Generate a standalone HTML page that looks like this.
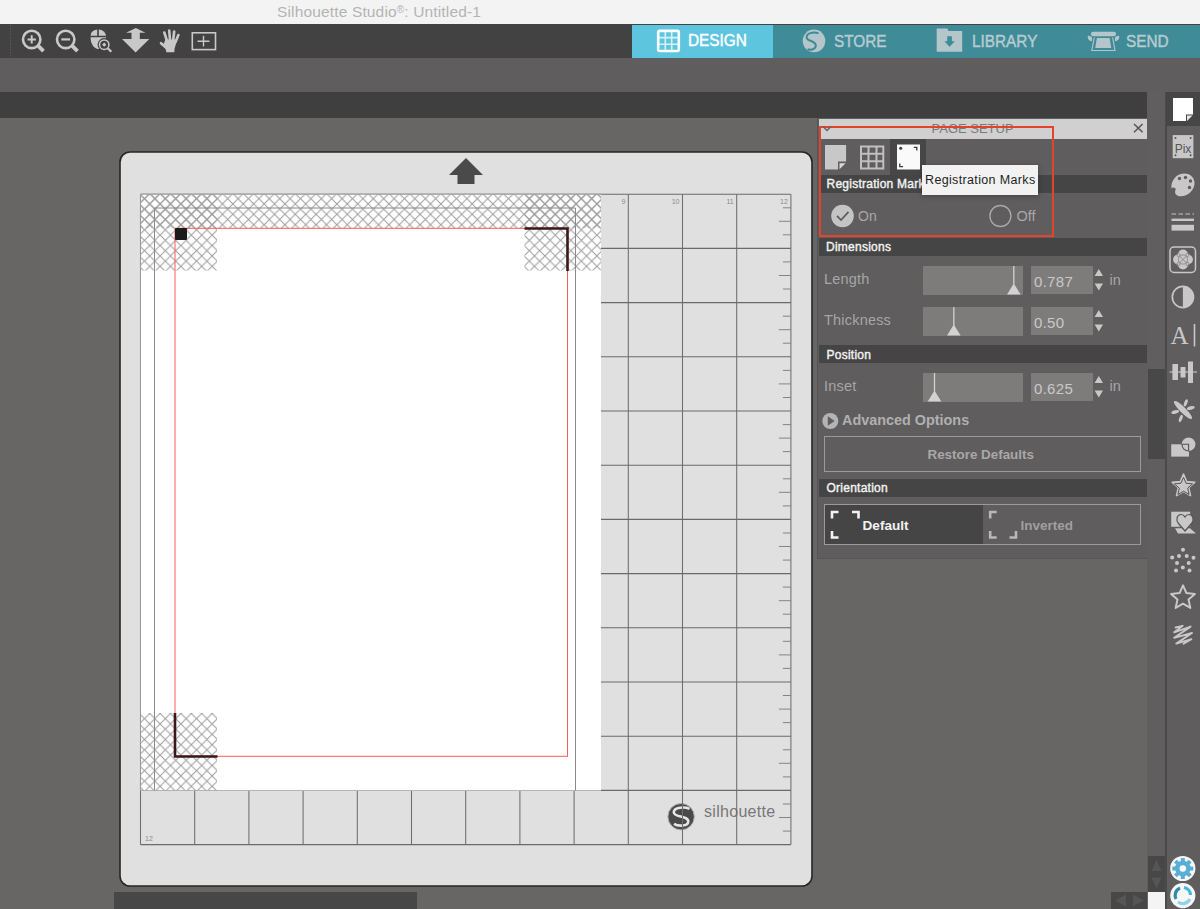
<!DOCTYPE html>
<html><head><meta charset="utf-8">
<style>
*{margin:0;padding:0;box-sizing:border-box}
html,body{width:1200px;height:909px;overflow:hidden;background:#686665;font-family:"Liberation Sans",sans-serif}
.a{position:absolute}
.t{position:absolute;white-space:nowrap;line-height:1}
#title{left:0;top:0;width:1200px;height:24px;background:#f3f3f3}
#tb{left:0;top:24px;width:1200px;height:34px;background:#424242}
#band1{left:0;top:58px;width:1200px;height:34px;background:#5f5d5e}
#band2{left:0;top:92px;width:1147px;height:26px;background:#3f3f3f}
#main{left:0;top:118px;width:1147px;height:791px;background:#686665}
.hdr{position:absolute;left:819px;width:328px;background:#454545}
.hdr span{position:absolute;left:8px;font-size:12px;font-weight:bold;color:#f0f0f0;line-height:1}
.lbl{font-size:14px;color:#a6a6a6}
.sl{position:absolute;left:923px;width:100px;background:#7d7c7b}
.inp{position:absolute;left:1031px;width:62px;background:#7d7c7b}
.inp span{position:absolute;left:4px;font-size:14px;color:#c9c9c9;line-height:1}
</style></head><body>
<div id="title" class="a"></div>
<div id="tb" class="a"></div>
<div id="band1" class="a"></div>
<div id="band2" class="a"></div>
<div id="main" class="a"></div>

<svg class="a" style="left:0;top:0" width="1200" height="909" viewBox="0 0 1200 909">
<defs><pattern id="hx" patternUnits="userSpaceOnUse" x="139.3" y="193.5" width="10.4" height="10.4"><path d="M0 0L10.4 10.4M10.4 0L0 10.4" stroke="#9c9c9c" stroke-width="1" fill="none"/></pattern></defs>
<rect x="120" y="152" width="692" height="734" rx="10" ry="10" fill="#e0e0e0" stroke="#262626" stroke-width="1.6"/>
<circle cx="681.1" cy="816.7" r="13.2" fill="#4a4a4a" stroke="#b0b0b0" stroke-width="1"/>
<path d="M689.5 808.8C685 806.5 673.5 807 673.8 812.5C674.2 817.5 688.5 815.5 688.3 821.5C688.1 826.5 678 826.5 674 823.8" stroke="#e6e6e6" stroke-width="2.6" fill="none"/>
<text x="704" y="817.2" font-size="16" fill="#777" font-family="Liberation Sans" letter-spacing="0.3">silhouette</text>
<path d="M140.5 194.2V844.6M194.7 194.2V844.6M248.9 194.2V844.6M303.1 194.2V844.6M357.3 194.2V844.6M411.5 194.2V844.6M465.7 194.2V844.6M519.9 194.2V844.6M574.1 194.2V844.6M628.3 194.2V844.6M682.5 194.2V844.6M736.7 194.2V844.6M790.9 194.2V844.6" stroke="#6e6e6e" stroke-width="1.05" fill="none"/>
<path d="M140.5 194.2H790.9M140.5 248.4H790.9M140.5 302.6H790.9M140.5 356.8H790.9M140.5 411.0H790.9M140.5 465.2H790.9M140.5 519.4H790.9M140.5 573.6H790.9M140.5 627.8H790.9M140.5 682.0H790.9M140.5 736.2H790.9M140.5 790.4H790.9M140.5 844.6H790.9" stroke="#6a6a6a" stroke-width="1.1" fill="none"/>
<path d="M782.9 207.8H790.9M778.9 221.3H790.9M782.9 234.8H790.9M782.9 261.9H790.9M778.9 275.5H790.9M782.9 289.0H790.9M782.9 316.2H790.9M778.9 329.7H790.9M782.9 343.2H790.9M782.9 370.4H790.9M778.9 383.9H790.9M782.9 397.5H790.9M782.9 424.6H790.9M778.9 438.1H790.9M782.9 451.6H790.9M782.9 478.8H790.9M778.9 492.3H790.9M782.9 505.9H790.9M782.9 533.0H790.9M778.9 546.5H790.9M782.9 560.1H790.9M782.9 587.1H790.9M778.9 600.7H790.9M782.9 614.2H790.9M782.9 641.3H790.9M778.9 654.9H790.9M782.9 668.4H790.9M782.9 695.5H790.9M778.9 709.1H790.9M782.9 722.6H790.9M782.9 749.8H790.9M778.9 763.3H790.9M782.9 776.9H790.9M782.9 804.0H790.9M778.9 817.5H790.9M782.9 831.1H790.9" stroke="#7a7a7a" stroke-width="0.9" fill="none"/>
<text x="625.3" y="203.5" text-anchor="end" font-size="7" fill="#8a8a8a" font-family="Liberation Sans">9</text>
<text x="679.5" y="203.5" text-anchor="end" font-size="7" fill="#8a8a8a" font-family="Liberation Sans">10</text>
<text x="733.7" y="203.5" text-anchor="end" font-size="7" fill="#8a8a8a" font-family="Liberation Sans">11</text>
<text x="787.9" y="203.5" text-anchor="end" font-size="7" fill="#8a8a8a" font-family="Liberation Sans">12</text>
<text x="145" y="841" font-size="7" fill="#8a8a8a" font-family="Liberation Sans">12</text>
<rect x="140.5" y="194.2" width="460.5" height="596.3" fill="#fff"/>
<rect x="140.5" y="194.2" width="460.5" height="33.8" fill="url(#hx)"/>
<rect x="140.5" y="194.2" width="76.5" height="76.3" fill="url(#hx)"/>
<rect x="524.5" y="194.2" width="76.5" height="76.3" fill="url(#hx)"/>
<rect x="140.5" y="713.0" width="76.5" height="77.5" fill="url(#hx)"/>
<path d="M140.5 790.5V194.2H601.0" stroke="#9a9a9a" stroke-width="1" fill="none"/>
<path d="M154.5 790.5V208H575.5V790.5" stroke="#8a8a8a" stroke-width="1" fill="none"/>
<rect x="175" y="228.3" width="392.5" height="528" fill="none" stroke="#ff5a5a" stroke-width="1"/>
<rect x="175" y="228" width="12" height="12" rx="1" fill="#1c1a1a"/>
<path d="M524.5 228.5H567.5V271M175 713V756.5H217.5" stroke="#3a1818" stroke-width="2.6" fill="none"/>
<path d="M466 158L483 175H474.5V184H457.5V175H449Z" fill="#4a4a4a"/>
</svg>
<div class="a" style="left:632px;top:25px;width:141px;height:33px;background:#5ec5df"></div>
<div class="a" style="left:773px;top:25px;width:427px;height:33px;background:#3f8b98"></div>

<!-- panel -->
<div class="a" style="left:817px;top:118px;width:330px;height:441px;background:#5f5d5e;border-left:1px solid #555;border-bottom:1px solid #575757"></div>
<div class="a" style="left:819px;top:119px;width:328px;height:20px;background:#d0d0d0"></div>
<div class="a" style="left:890px;top:139px;width:36px;height:36px;background:#474747"></div>
<div class="hdr" style="top:175px;height:18px"></div>
<div class="hdr" style="top:238px;height:18px"></div>
<div class="sl" style="top:266px;height:29px"></div>
<div class="inp" style="top:266px;height:28px"></div>
<div class="sl" style="top:307px;height:29px"></div>
<div class="inp" style="top:307px;height:28px"></div>
<div class="hdr" style="top:345px;height:18px"></div>
<div class="sl" style="top:373px;height:29px"></div>
<div class="inp" style="top:373px;height:28px"></div>
<div class="a" style="left:824px;top:436px;width:317px;height:36px;border:1px solid #9a9a9a"></div>
<div class="hdr" style="top:479px;height:18px"></div>
<div class="a" style="left:824px;top:504px;width:317px;height:41px;border:1px solid #9a9a9a"></div>
<div class="a" style="left:825px;top:505px;width:158px;height:39px;background:#454545"></div>
<!-- scrollbars -->
<div class="a" style="left:1147px;top:92px;width:18px;height:800px;background:#605e5f"></div>
<div class="a" style="left:1148px;top:369px;width:17px;height:90px;background:#484848"></div>
<div class="a" style="left:1165px;top:92px;width:35px;height:817px;background:#5f5d5e;border-left:2px solid #4a4a4a"></div>
<div class="a" style="left:1166px;top:92px;width:34px;height:34px;background:#464646"></div>
<div class="a" style="left:114px;top:892px;width:303px;height:17px;background:#474747"></div>
<div class="a" style="left:1111px;top:892px;width:36px;height:17px;background:#474747"></div>
<div class="a" style="left:1148px;top:856px;width:17px;height:36px;background:#474747"></div>
<div class="a" style="left:1148px;top:892px;width:17px;height:17px;background:#f4f4f4"></div>

<span class="t" style="left:277px;top:3.9px;font-size:15.5px;color:#b3b3b3;font-weight:normal;letter-spacing:0.15px">Silhouette Studio<span style="font-size:10px;vertical-align:4px">®</span>: Untitled-1</span>
<span class="t" style="left:931.5px;top:122.3px;font-size:13px;color:#7a7a7a;font-weight:normal;">PAGE SETUP</span>
<span class="t" style="left:826.5px;top:178.2px;font-size:12px;color:#f2f2f2;font-weight:normal;-webkit-text-stroke:0.4px #f2f2f2;letter-spacing:0.25px">Registration Marks</span>
<span class="t" style="left:826px;top:241.1px;font-size:12px;color:#f2f2f2;font-weight:normal;-webkit-text-stroke:0.4px #f2f2f2;letter-spacing:0.25px">Dimensions</span>
<span class="t" style="left:826.5px;top:348.6px;font-size:12px;color:#f2f2f2;font-weight:normal;-webkit-text-stroke:0.4px #f2f2f2;letter-spacing:0.25px">Position</span>
<span class="t" style="left:826.5px;top:482.4px;font-size:12px;color:#f2f2f2;font-weight:normal;-webkit-text-stroke:0.4px #f2f2f2;letter-spacing:0.25px">Orientation</span>
<span class="t" style="left:824px;top:272.3px;font-size:14.5px;color:#a6a6a6;font-weight:normal;letter-spacing:0.2px">Length</span>
<span class="t" style="left:824px;top:312.9px;font-size:14.5px;color:#a6a6a6;font-weight:normal;letter-spacing:0.2px">Thickness</span>
<span class="t" style="left:824px;top:379.3px;font-size:14.5px;color:#a6a6a6;font-weight:normal;letter-spacing:0.2px">Inset</span>
<span class="t" style="left:1034px;top:274.0px;font-size:15px;color:#c9c9c9;font-weight:normal;letter-spacing:0.3px">0.787</span>
<span class="t" style="left:1034px;top:314.9px;font-size:15px;color:#c9c9c9;font-weight:normal;letter-spacing:0.3px">0.50</span>
<span class="t" style="left:1034px;top:381.4px;font-size:15px;color:#c9c9c9;font-weight:normal;letter-spacing:0.3px">0.625</span>
<span class="t" style="left:1109.5px;top:272.5px;font-size:14.5px;color:#a6a6a6;font-weight:normal;">in</span>
<span class="t" style="left:1109.5px;top:379.2px;font-size:14.5px;color:#a6a6a6;font-weight:normal;">in</span>
<span class="t" style="left:842px;top:413.3px;font-size:14.4px;color:#b0b0b0;font-weight:bold;">Advanced Options</span>
<span class="t" style="left:927.5px;top:448.4px;font-size:13.4px;color:#a8a8a8;font-weight:bold;">Restore Defaults</span>
<span class="t" style="left:862.5px;top:519.0px;font-size:13.6px;color:#f2f2f2;font-weight:bold;">Default</span>
<span class="t" style="left:1020.5px;top:519.1px;font-size:13.5px;color:#a0a0a0;font-weight:bold;">Inverted</span>
<span class="t" style="left:858px;top:209.0px;font-size:14px;color:#a8a8a8;font-weight:normal;">On</span>
<span class="t" style="left:1016.5px;top:208.6px;font-size:14.5px;color:#a8a8a8;font-weight:normal;">Off</span>
<span class="t" style="left:688px;top:32.3px;font-size:16.5px;color:#ffffff;transform:scaleX(0.93);transform-origin:0 0;-webkit-text-stroke:0.45px #ffffff">DESIGN</span>
<span class="t" style="left:834px;top:32.8px;font-size:16.5px;color:#b8cbd0;transform:scaleX(0.93);transform-origin:0 0;-webkit-text-stroke:0.45px #b8cbd0">STORE</span>
<span class="t" style="left:972px;top:32.8px;font-size:16.5px;color:#b8cbd0;transform:scaleX(0.93);transform-origin:0 0;-webkit-text-stroke:0.45px #b8cbd0">LIBRARY</span>
<span class="t" style="left:1125.5px;top:32.8px;font-size:16.5px;color:#b8cbd0;transform:scaleX(0.93);transform-origin:0 0;-webkit-text-stroke:0.45px #b8cbd0">SEND</span>
<div class="a" style="left:819px;top:126px;width:235px;height:111px;border:2px solid #e4432b"></div>
<div class="a" style="left:922px;top:165px;width:116px;height:30px;background:#f2f2f2;box-shadow:0 1px 5px rgba(0,0,0,.3)"></div>
<span class="t" style="left:925px;top:173.8px;font-size:12.5px;color:#1e1e1e;font-weight:normal;letter-spacing:0.35px">Registration Marks</span>
<svg class="a" style="left:0;top:0" width="1200" height="909" viewBox="0 0 1200 909">
<path d="M10.5 25V58" stroke="#5a5a5a" stroke-width="1" stroke-dasharray="1.5 1.5"/>
<g fill="none" stroke="#c8c8c8"><circle cx="31.7" cy="39.4" r="8.7" stroke-width="2.6"/><path d="M38 45.7L43.5 51.2" stroke-width="3.8"/><path d="M27.5 39.4H35.9M31.7 35.3V43.5" stroke-width="2"/></g>
<g fill="none" stroke="#c8c8c8"><circle cx="65.7" cy="39.4" r="8.7" stroke-width="2.6"/><path d="M72 45.7L77.5 51.2" stroke-width="3.8"/><path d="M61.3 39.4H70.1" stroke-width="2.2"/></g>
<g fill="#c8c8c8"><path d="M90.6 35.7A7.8 6.5 0 0 1 97.2 29.5V35.7Z"/><path d="M98.8 29.5A7.8 6.5 0 0 1 106 35.7H98.8Z"/><path d="M90.5 37.2H106.1A7.8 11.8 0 0 1 90.5 37.2Z"/></g><circle cx="104.2" cy="44.7" r="6.6" fill="#424242"/>
<g fill="none" stroke="#c8c8c8"><circle cx="104.2" cy="44.7" r="4.7" stroke-width="1.5"/><path d="M107.8 48.3L111.3 51.8" stroke-width="2.2"/></g><path d="M104.2 42.6L106.3 44.7L104.2 46.8L102.1 44.7Z" fill="#c8c8c8"/>
<path d="M135.8 28L145.5 32.7H139.8V39H149.3L135.6 52.5L122 39H131.5V32.7H126Z" fill="#c8c8c8"/>
<g stroke="#c8c8c8" stroke-linecap="round" fill="none" stroke-width="2.6"><path d="M161 43.2L166 47.5"/><path d="M164.3 32.5L167 41"/><path d="M169.2 30.5L170 40"/><path d="M174.2 31.5L173.2 40"/><path d="M178.4 35L175.5 42"/></g><path d="M165.5 39.5H177.2L174.5 49L174.3 52.3H166.3L165.8 49.5L163 45.5Z" fill="#c8c8c8"/>
<rect x="192.3" y="32.8" width="23.2" height="16.8" fill="none" stroke="#c8c8c8" stroke-width="1.6"/><path d="M197.5 41.2H209.5M203.5 35.8V46.5" stroke="#c8c8c8" stroke-width="1.4"/>
<rect x="658.2" y="30.9" width="20.6" height="20.1" rx="1.5" fill="none" stroke="#fff" stroke-width="2.6"/><path d="M665.3 31V51M671.7 31V51M658 37.6H679M658 44.3H679" stroke="#fff" stroke-opacity="0.75" stroke-width="1.6"/>
<circle cx="814" cy="40.9" r="11.3" fill="#b5c6ca"/>
<path d="M818.5 33.2C813 31.8 806.5 33 806.6 37.5C806.8 41.5 815.6 40.6 815.8 45.3C816 49.2 811 50.6 807.5 49.2" stroke="#3f8b98" stroke-width="2" fill="none"/>
<path d="M936.7 28.5H947.2L948.6 31.1H962.2V51.7H936.7Z" fill="#b5c6ca"/><path d="M947.2 36.2H951.9V41.2H954.9L949.6 46.8L944.4 41.2H947.2Z" fill="#3f8b98"/>
<rect x="1090.9" y="31.7" width="25.2" height="4.6" rx="2.3" fill="#b5c6ca"/><path d="M1088 35.5C1087 38.5 1089 41 1092 41.3V37Z M1119 35.5C1120 38.5 1118 41 1115 41.3V37Z" fill="#b5c6ca"/><path d="M1096.9 38H1109.6L1111.2 48H1095.2Z" fill="#b5c6ca"/><path d="M1094.3 37.5L1091.8 50.5H1115L1112.6 37.5" stroke="#b5c6ca" stroke-width="1.1" fill="none"/>
<path d="M1134 124L1142.6 132.3M1142.6 124L1134 132.3" stroke="#555" stroke-width="1.5"/>
<path d="M823 126.5L827 130.5L831 126.5" stroke="#666" stroke-width="1.5" fill="none"/>
<path d="M825 145H846.1V161.6H838V169.4H825Z" fill="#c8c8c8"/><path d="M839.5 163.2H845.6L839.5 169.3Z" fill="#d8d8d8"/>
<path d="M861 146.5H883.3V168.5H861Z M868.5 146.5V168.5M876.5 146.5V168.5M861 153.8H883.3M861 161.2H883.3" stroke="#c0c0c0" stroke-width="2" fill="none"/>
<rect x="897" y="144.5" width="23" height="25" fill="#fafafa"/><circle cx="900.7" cy="148.3" r="1.5" fill="#3a3a3a"/><path d="M913.8 147.3H916.8V150.6M899.8 163.5V166.6H903" stroke="#3a3a3a" stroke-width="1.3" fill="none"/>
<circle cx="842.5" cy="216" r="11.3" fill="#c4c4c4"/><path d="M837 215.8L841 220L848.5 211.8" stroke="#5f5d5e" stroke-width="1.8" fill="none"/>
<circle cx="1000.4" cy="216" r="10.5" fill="none" stroke="#a8a8a8" stroke-width="1.4"/>
<path d="M1013.8 266V284.5" stroke="#d2d2d2" stroke-width="1.3"/><path d="M1013.8 283.5L1020.5999999999999 294.5H1007.0Z" fill="#d2d2d2"/>
<path d="M953.8 307V325.5" stroke="#d2d2d2" stroke-width="1.3"/><path d="M953.8 324.5L960.5999999999999 335.5H947.0Z" fill="#d2d2d2"/>
<path d="M934.5 373V391.5" stroke="#d2d2d2" stroke-width="1.3"/><path d="M934.5 390.5L941.3 401.5H927.7Z" fill="#d2d2d2"/>
<path d="M1098.8 269L1103 276H1094.6Z M1098.8 290.5L1103 283.5H1094.6Z" fill="#c8c8c8"/>
<path d="M1098.8 310L1103 317H1094.6Z M1098.8 331.5L1103 324.5H1094.6Z" fill="#c8c8c8"/>
<path d="M1098.8 376L1103 383H1094.6Z M1098.8 397.5L1103 390.5H1094.6Z" fill="#c8c8c8"/>
<circle cx="830.3" cy="421" r="8" fill="#b4b4b4"/><path d="M827.8 416.2L834.6 421L827.8 425.8Z" fill="#5f5d5e"/>
<path d="M832 518.5V512H838.5M852.0 512H858.5V518.5M832 531.0V537.5H838.5" stroke="#f2f2f2" stroke-width="2.6" fill="none"/>
<path d="M990.2 518.5V512H996.7M990.2 531.0V537.5H996.7M1009.5 537.5H1016V531.0" stroke="#b8b8b8" stroke-width="2.6" fill="none"/>
<path d="M1173 98H1193V114.5H1186V121H1173Z" fill="#fff"/><path d="M1187 115.5H1192.5L1187 121Z" fill="#e6e6e6"/>
<rect x="1172.7" y="135.1" width="20.7" height="23.1" fill="#c8c8c8"/><text x="1183" y="152.5" text-anchor="middle" font-size="12" fill="#555" font-family="Liberation Sans">Pix</text><g fill="#555"><circle cx="1175.5" cy="138" r="1"/><circle cx="1190.6" cy="138" r="1"/><circle cx="1175.5" cy="155.3" r="1"/><circle cx="1190.6" cy="155.3" r="1"/></g>
<path d="M1184 173.5C1191 173.5 1195 178.5 1194.5 184C1194 190 1188 196.3 1181 196.3C1176 196.3 1174 193 1175.5 190C1176.5 188 1173 186.5 1171.5 188.5C1170.5 183 1175 173.5 1184 173.5Z" fill="#c8c8c8"/><g fill="#5f5d5e"><circle cx="1179.5" cy="178.5" r="1.7"/><circle cx="1185.5" cy="177.5" r="1.7"/><circle cx="1190.5" cy="181" r="1.7"/><circle cx="1189.5" cy="187.5" r="1.7"/></g>
<path d="M1171.5 214H1194" stroke="#c8c8c8" stroke-width="1.2" stroke-dasharray="4.5 2.5"/><path d="M1171.5 219.8H1194" stroke="#c8c8c8" stroke-width="2.4"/><rect x="1171.5" y="224.8" width="22.5" height="5.8" fill="#c8c8c8"/>
<rect x="1170" y="247" width="25.5" height="25.5" rx="4" fill="none" stroke="#c8c8c8" stroke-width="1.5"/><g fill="#c8c8c8"><circle cx="1183" cy="254.6" r="5"/><circle cx="1183" cy="264.4" r="5"/><circle cx="1178.1" cy="259.5" r="5"/><circle cx="1187.9" cy="259.5" r="5"/></g><g fill="none" stroke="#8e8e8e" stroke-width="1"><circle cx="1183" cy="259.5" r="4.6"/><path d="M1179.5 256L1186.5 263M1186.5 256L1179.5 263"/><circle cx="1178.5" cy="255" r="1.6"/><circle cx="1187.5" cy="255" r="1.6"/><circle cx="1178.5" cy="264" r="1.6"/><circle cx="1187.5" cy="264" r="1.6"/></g>
<circle cx="1182.9" cy="297" r="10.6" fill="none" stroke="#c8c8c8" stroke-width="1.7"/><path d="M1182.9 286.4A10.6 10.6 0 0 1 1182.9 307.6Z" fill="#c8c8c8"/>
<text x="1170.5" y="344.3" font-size="25" fill="#c8c8c8" font-family="Liberation Serif">A</text><path d="M1194.5 324V346.5" stroke="#c8c8c8" stroke-width="1.6"/>
<path d="M1169.5 372H1197" stroke="#c8c8c8" stroke-width="1.1"/><rect x="1172.4" y="364" width="5.6" height="16" fill="#c8c8c8"/><rect x="1180.5" y="367" width="5" height="10.5" fill="#c8c8c8"/><rect x="1188" y="361.5" width="5" height="21.5" fill="#c8c8c8"/>
<g fill="#c8c8c8"><ellipse cx="1183" cy="410" rx="12.5" ry="2.9" transform="rotate(45 1183 410)"/><ellipse cx="1185.8" cy="402.8" rx="3.8" ry="1.6" transform="rotate(-70 1185.8 402.8)"/><ellipse cx="1190.8" cy="408" rx="4" ry="1.7" transform="rotate(-15 1190.8 408)"/><ellipse cx="1175.2" cy="412" rx="4" ry="1.7" transform="rotate(-15 1175.2 412)"/><ellipse cx="1180.8" cy="418.5" rx="3.8" ry="1.6" transform="rotate(-70 1180.8 418.5)"/></g>
<rect x="1171.2" y="444.3" width="17.8" height="12.3" fill="#c8c8c8"/><circle cx="1188.6" cy="444.3" r="6.8" fill="#c8c8c8"/><path d="M1182 444.3A6.6 6.6 0 0 0 1188.6 451V444.3Z" fill="none" stroke="#555" stroke-width="1.1"/>
<polygon points="1183.50,474.00 1186.73,481.55 1194.91,482.29 1188.73,487.70 1190.55,495.71 1183.50,491.50 1176.45,495.71 1178.27,487.70 1172.09,482.29 1180.27,481.55" fill="#c8c8c8" stroke="#c8c8c8" stroke-width="1.5" stroke-linejoin="round"/><polygon points="1183.50,477.30 1186.09,483.24 1192.54,483.86 1187.68,488.16 1189.08,494.49 1183.50,491.20 1177.92,494.49 1179.32,488.16 1174.46,483.86 1180.91,483.24" fill="#c8c8c8" stroke="#555" stroke-width="1" stroke-linejoin="round"/>
<path d="M1171.2 511.7H1190.2V526.8H1171.2Z" fill="#c8c8c8"/><path d="M1175 528.3H1190L1196 533.6H1178Z" fill="#c8c8c8"/><path d="M1185 531L1178.5 523.5C1175.5 520 1177 514.5 1181 514.5C1183 514.5 1184.5 516 1185 517C1185.5 516 1187 514.5 1189 514.5C1193 514.5 1194.5 520 1191.5 523.5Z" fill="#c8c8c8" stroke="#555" stroke-width="1.2"/>
<g fill="#c8c8c8"><circle cx="1183" cy="549.8" r="2"/><circle cx="1179" cy="556" r="2"/><circle cx="1186.7" cy="556" r="2"/><circle cx="1172.2" cy="557.5" r="2"/><circle cx="1193.5" cy="557.8" r="2"/><circle cx="1177" cy="563" r="2"/><circle cx="1188.7" cy="563" r="2"/><circle cx="1182.8" cy="567.5" r="2"/><circle cx="1176" cy="570.5" r="2"/><circle cx="1189.5" cy="570.5" r="2"/></g>
<polygon points="1183.00,585.30 1186.41,593.11 1194.89,593.94 1188.52,599.59 1190.35,607.91 1183.00,603.60 1175.65,607.91 1177.48,599.59 1171.11,593.94 1179.59,593.11" fill="none" stroke="#c8c8c8" stroke-width="2" stroke-linejoin="round"/>
<path d="M1175.5 627.5L1182.7 625.8L1174.2 632.3L1190.6 626.6L1174.2 637.8L1192 633L1176.3 643.6L1191.4 639.2L1183.5 643.8" fill="none" stroke="#c8c8c8" stroke-width="1.9" stroke-linecap="round" stroke-linejoin="round"/>
<circle cx="1182.8" cy="868.5" r="12.6" fill="#f7f7f7"/><g transform="translate(1182.8 868.5)" fill="#5aaed6"><circle r="7.8"/><rect x="-2" y="-10.5" width="4" height="4" transform="rotate(0)"/><rect x="-2" y="-10.5" width="4" height="4" transform="rotate(45)"/><rect x="-2" y="-10.5" width="4" height="4" transform="rotate(90)"/><rect x="-2" y="-10.5" width="4" height="4" transform="rotate(135)"/><rect x="-2" y="-10.5" width="4" height="4" transform="rotate(180)"/><rect x="-2" y="-10.5" width="4" height="4" transform="rotate(225)"/><rect x="-2" y="-10.5" width="4" height="4" transform="rotate(270)"/><rect x="-2" y="-10.5" width="4" height="4" transform="rotate(315)"/><circle r="3.2" fill="#fff"/></g>
<circle cx="1182.8" cy="895.6" r="12.6" fill="#f7f7f7"/><g fill="none" stroke-width="3.2"><path d="M1176 899A8 8 0 0 1 1180 888" stroke="#2e8aa8"/><path d="M1184 887.5A8 8 0 0 1 1190.5 895" stroke="#47b8d8"/><path d="M1190 899A8 8 0 0 1 1178 902" stroke="#8fd3ea"/></g>
<path d="M1156.5 859.7L1161.5 871H1151.5Z M1156.5 888.5L1161.5 877.5H1151.5Z M1115 900.5L1126 894.5V906.5Z M1144 900.5L1133 894.5V906.5Z" fill="#555"/>
</svg>
</body></html>
